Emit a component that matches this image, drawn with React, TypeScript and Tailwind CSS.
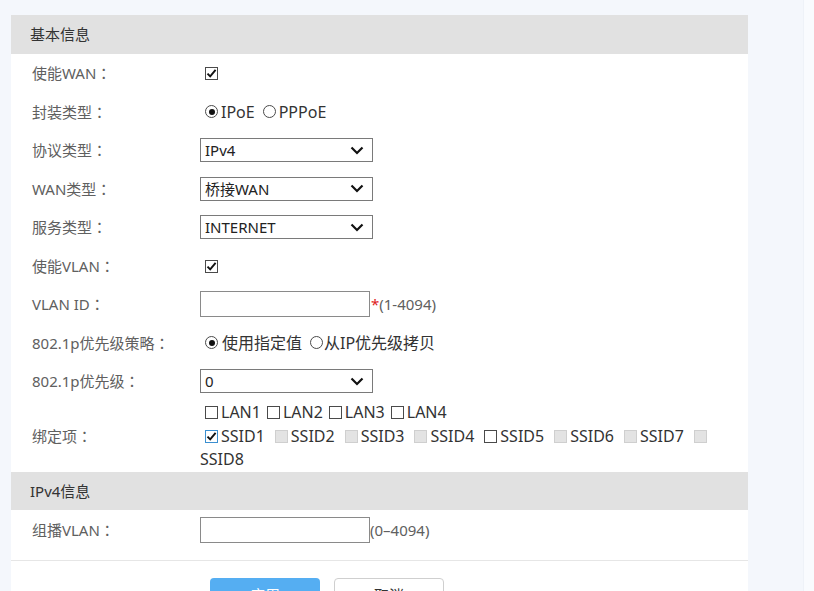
import type { ReactNode } from 'react'

const FONT = { fontFamily: '"Noto Sans", "Noto Sans CJK SC", sans-serif' }
const COLON = { fontFamily: '"Noto Sans CJK TC", sans-serif' }

function Check({ checked = false, disabled = false, focus = false }: { checked?: boolean; disabled?: boolean; focus?: boolean }) {
  const tone = disabled
    ? 'bg-[#e3e3e3] border-[#cfcfcf]'
    : focus
      ? 'bg-white border-[#3b8fd0]'
      : 'bg-white border-[#4a4a4a]'
  return (
    <span className={`inline-flex items-center justify-center w-[13px] h-[13px] border shrink-0 ${tone}`}>
      {checked && (
        <svg width="11" height="11" viewBox="0 0 11 11">
          <path d="M1.5 5.6 L4.2 8.4 L9.6 1.8" fill="none" stroke="#111" strokeWidth="1.9" />
        </svg>
      )}
    </span>
  )
}

function Radio({ checked = false }: { checked?: boolean }) {
  return (
    <span className="inline-flex items-center justify-center w-[13px] h-[13px] rounded-full border border-[#4a4a4a] bg-white shrink-0">
      {checked && <span className="w-[6px] h-[6px] rounded-full bg-[#111]" />}
    </span>
  )
}

function Select({ value }: { value: string }) {
  return (
    <div className="flex items-center justify-between w-[173px] h-[24px] border border-[#7a7a7a] bg-white pl-[4px] pr-[8px] text-[15px] text-[#222]">
      <span>{value}</span>
      <svg width="14" height="9" viewBox="0 0 14 9">
        <path d="M1.5 1.5 L7 7 L12.5 1.5" fill="none" stroke="#111" strokeWidth="2.2" />
      </svg>
    </div>
  )
}

function Row({ label, children, h = 'h-[38.5px]' }: { label: string; children: ReactNode; h?: string }) {
  return (
    <div className={`flex items-center ${h}`}>
      <div className="w-[189px] pl-[21px] text-[15px] text-[#606060] shrink-0">
        {label}
        <span style={COLON}>：</span>
      </div>
      <div className="flex items-center">{children}</div>
    </div>
  )
}

function Header({ title, h }: { title: string; h: string }) {
  return (
    <div className={`flex items-center ${h} bg-[#e1e1e1] pl-[19px] text-[15px] text-[#333]`}>{title}</div>
  )
}

const ssids = [
  { name: 'SSID1', checked: true, focus: true },
  { name: 'SSID2', disabled: true },
  { name: 'SSID3', disabled: true },
  { name: 'SSID4', disabled: true },
  { name: 'SSID5' },
  { name: 'SSID6', disabled: true },
  { name: 'SSID7', disabled: true },
]

export default function App() {
  return (
    <div className="flex w-[814px] h-[591px] overflow-hidden bg-[#f4f7fc]" style={FONT}>
      <div className="flex-1 pt-[15px] pl-[11px]">
        <div className="w-[737px] bg-white pb-[20px]">
          <Header title="基本信息" h="h-[39px]" />

          <Row label="使能WAN">
            <span className="ml-[5px]"><Check checked /></span>
          </Row>
          <Row label="封装类型">
            <div className="flex items-center text-[16px] text-[#333] ml-[5px]">
              <Radio checked />
              <span className="ml-[3px]">IPoE</span>
              <span className="ml-[8px]"><Radio /></span>
              <span className="ml-[3px]">PPPoE</span>
            </div>
          </Row>
          <Row label="协议类型">
            <Select value="IPv4" />
          </Row>
          <Row label="WAN类型">
            <Select value="桥接WAN" />
          </Row>
          <Row label="服务类型">
            <Select value="INTERNET" />
          </Row>
          <Row label="使能VLAN">
            <span className="ml-[5px]"><Check checked /></span>
          </Row>
          <Row label="VLAN ID">
            <div className="w-[170px] h-[26px] border border-[#8a8a8a] bg-white" />
            <span className="text-[15px] text-[#e02020] ml-[1px]">*</span>
            <span className="text-[15px] text-[#606060]">(1-4094)</span>
          </Row>
          <Row label="802.1p优先级策略">
            <div className="flex items-center text-[16px] text-[#333] ml-[5px]">
              <Radio checked />
              <span className="ml-[4px]">使用指定值</span>
              <span className="ml-[8px]"><Radio /></span>
              <span className="ml-[1px]">从IP优先级拷贝</span>
            </div>
          </Row>
          <Row label="802.1p优先级">
            <Select value="0" />
          </Row>

          <Row label="绑定项" h="h-[71.5px]">
            <div className="flex flex-col text-[16px] text-[#333] leading-[23.5px]">
              <div className="flex items-center ml-[5px]">
                {['LAN1', 'LAN2', 'LAN3', 'LAN4'].map((n) => (
                  <span key={n} className="flex items-center mr-[6px]">
                    <Check />
                    <span className="ml-[3px]">{n}</span>
                  </span>
                ))}
              </div>
              <div className="flex items-center ml-[5px]">
                {ssids.map((s) => (
                  <span key={s.name} className="flex items-center mr-[10px]">
                    <Check checked={s.checked} disabled={s.disabled} focus={s.focus} />
                    <span className="ml-[3px]">{s.name}</span>
                  </span>
                ))}
                <Check disabled />
              </div>
              <div>SSID8</div>
            </div>
          </Row>

          <Header title="IPv4信息" h="h-[38px]" />

          <Row label="组播VLAN" h="h-[40px]">
            <div className="w-[170px] h-[26px] border border-[#8a8a8a] bg-white" />
            <span className="text-[15px] text-[#606060]">(0–4094)</span>
          </Row>

          <div className="mt-[10px] border-t border-[#e6e6e6]" />

          <div className="flex gap-[14px] pl-[199px] pt-[17px]">
            <button className="w-[110px] h-[34px] rounded-[4px] bg-[#55aef2] text-white text-[15px]">应用</button>
            <button className="w-[110px] h-[34px] rounded-[4px] border border-[#cfcfcf] bg-white text-[#333] text-[15px]">取消</button>
          </div>
        </div>
      </div>
      <div className="w-[11px] bg-[#f9fbfe] border-l border-[#eef2f8]" />
    </div>
  )
}
